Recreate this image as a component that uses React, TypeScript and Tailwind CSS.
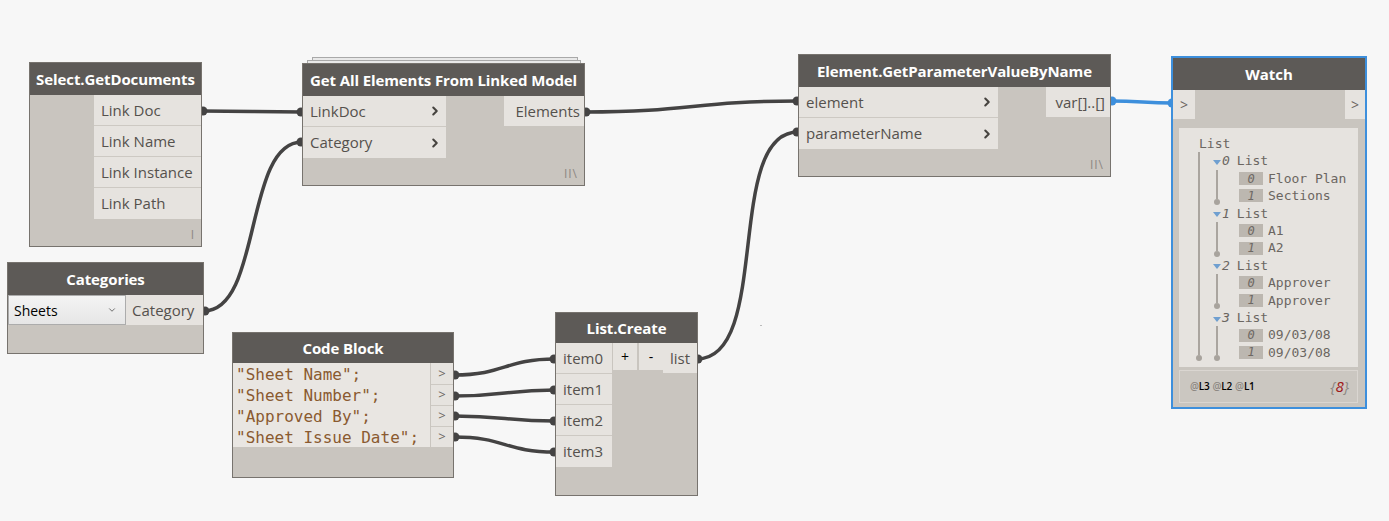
import React from 'react'
import clsx from 'clsx'
import { ChevronRight, ChevronDown } from 'lucide-react'

type NodeProps = {
	title: string
	className: string
	headerClass?: string
	children?: React.ReactNode
}

// generic dynamo node: dark title bar + warm grey body
const Node = ({ title, className, headerClass = 'h-[32px]', children }: NodeProps) => {
	return (
		<div className={clsx('absolute flex flex-col border border-[#77736e] bg-[#c9c5bf]', className)}>
			<div
				className={clsx(
					'shrink-0 bg-[#5d5a57] flex items-center justify-center text-white font-bold text-[15px] tracking-[-0.1px]',
					headerClass
				)}
			>
				{title}
			</div>
			{children}
		</div>
	)
}

const Lacing = ({ mark }: { mark: string }) => (
	<div className="flex-1 flex items-end justify-end pr-[6px] pb-[5px] text-[12px] leading-none text-[#8d8883] tracking-[1px]">
		{mark}
	</div>
)

const InPort = ({ label, chevron = true, last = false, w }: { label: string; chevron?: boolean; last?: boolean; w: string }) => (
	<div
		className={clsx(
			'h-[31px] flex items-center justify-between pl-[7px] pr-[4px] bg-[#e6e3df] text-[15px] text-[#55514d]',
			!last && 'border-b border-[#cdc9c3]',
			w
		)}
	>
		<span>{label}</span>
		{chevron && <ChevronRight size={14} strokeWidth={3.5} className="text-[#46433f]" />}
	</div>
)

const watchData = [
	['Floor Plan', 'Sections'],
	['A1', 'A2'],
	['Approver', 'Approver'],
	['09/03/08', '09/03/08'],
]

const TreeLine = ({ className }: { className?: string }) => (
	<div className={clsx('w-[6px] flex flex-col items-center shrink-0', className)}>
		<div className="w-[2px] flex-1 bg-[#aaa59f]" />
		<div className="w-[6px] h-[6px] rounded-full bg-[#a8a39d]" />
	</div>
)

const WatchTree = () => (
	<div className="mx-[6px] mr-[7px] mt-[9px] h-[239px] bg-[#e6e3df] pl-[17px] pt-[7px] font-['DejaVu_Sans_Mono',monospace] text-[13px] leading-[17.4px] text-[#6b6661]">
		<div className="pl-[3px]">List</div>
		<div className="flex">
			<TreeLine />
			<div className="ml-[11px] flex flex-col">
				{watchData.map((items, gi) => (
					<div key={gi}>
						<div className="flex items-center">
							<div className="w-0 h-0 border-l-[4px] border-r-[4px] border-t-[5px] border-l-transparent border-r-transparent border-t-[#6f9fd0] mt-[3px]" />
							<span className="ml-[1px] italic">{gi}</span>
							<span className="ml-[7px]">List</span>
						</div>
						<div className="flex">
							<TreeLine className="ml-[1px]" />
							<div className="ml-[19px] flex flex-col">
								{items.map((v, i) => (
									<div key={i} className="flex items-center h-[17.4px]">
										<div className="w-[24px] h-[13px] bg-[#bcb7b0] flex items-center justify-center italic text-[12px] leading-none text-[#6d6863]">
											{i}
										</div>
										<span className="ml-[5px]">{v}</span>
									</div>
								))}
							</div>
						</div>
					</div>
				))}
			</div>
		</div>
	</div>
)

const codeLines = ['"Sheet Name";', '"Sheet Number";', '"Approved By";', '"Sheet Issue Date";']

const Wires = () => (
	<svg className="absolute inset-0" width={1389} height={521}>
		<g fill="none" stroke="#444343" strokeWidth={3.5} strokeLinecap="round">
			<path d="M202,111 C250,111 255,112 302,112" />
			<path d="M204,311 C262,311 244,142 302,142" />
			<path d="M585,112 C690,112 695,101 798,101" />
			<path d="M697,359 C772,359 724,132 798,132" />
			<path d="M454,375 C505,375 505,359 555,359" />
			<path d="M454,396 C505,396 505,390 555,390" />
			<path d="M454,416 C505,416 505,421 555,421" />
			<path d="M454,437 C505,437 505,452 555,452" />
		</g>
		<g fill="#444343">
			<circle cx={203} cy={111} r={4.5} />
			<circle cx={301} cy={112} r={4.5} />
			<circle cx={205} cy={311} r={4.5} />
			<circle cx={301} cy={142} r={4.5} />
			<circle cx={586} cy={112} r={4.5} />
			<circle cx={797} cy={101} r={4.5} />
			<circle cx={698} cy={359} r={4.5} />
			<circle cx={797} cy={132} r={4.5} />
			<circle cx={455} cy={375} r={4.5} />
			<circle cx={455} cy={396} r={4.5} />
			<circle cx={455} cy={416} r={4.5} />
			<circle cx={455} cy={437} r={4.5} />
			<circle cx={554} cy={359} r={4.5} />
			<circle cx={554} cy={390} r={4.5} />
			<circle cx={554} cy={421} r={4.5} />
			<circle cx={554} cy={452} r={4.5} />
		</g>
		<path d="M1111,101 C1140,101 1145,103 1172,103" fill="none" stroke="#3d8fdc" strokeWidth={3.5} />
		<circle cx={1112} cy={101} r={4.5} fill="#3d8fdc" />
		<circle cx={1172} cy={103} r={4.5} fill="#3d8fdc" />
		<rect x={760} y={325} width={2} height={1} fill="#bbbbbb" />
	</svg>
)

export default function App() {
	return (
		<div className="relative w-[1389px] h-[521px] overflow-hidden bg-[#f7f7f7] font-['Open_Sans',sans-serif]">
			<Wires />

			{/* Select.GetDocuments */}
			<Node title="Select.GetDocuments" className="left-[29px] top-[62px] w-[173px] h-[185px]">
				<div className="flex justify-end">
					<div className="w-[107px] flex flex-col">
						<InPort label="Link Doc" chevron={false} w="w-full" />
						<InPort label="Link Name" chevron={false} w="w-full" />
						<InPort label="Link Instance" chevron={false} w="w-full" />
						<InPort label="Link Path" chevron={false} last w="w-full" />
					</div>
				</div>
				<Lacing mark="I" />
			</Node>

			{/* Categories */}
			<Node title="Categories" className="left-[7px] top-[262px] w-[197px] h-[92px]">
				<div className="h-[30px] flex">
					<div className="w-[118px] flex items-center justify-between pl-[5px] pr-[8px] border border-[#acacac] bg-gradient-to-b from-[#f4f4f4] to-[#e6e6e6] text-[14px] text-black">
						<span>Sheets</span>
						<ChevronDown size={10} strokeWidth={2} className="text-[#555]" />
					</div>
					<div className="flex-1 flex items-center pl-[6px] bg-[#e6e3df] text-[15px] text-[#55514d]">Category</div>
				</div>
			</Node>

			{/* stacked shadow behind the custom node */}
			<div className="absolute left-[312px] top-[57px] w-[266px] h-[20px] border border-[#a9a9a9] bg-[#e9e9e9]" />
			<div className="absolute left-[307px] top-[60px] w-[274px] h-[20px] border border-[#a9a9a9] bg-[#e9e9e9]" />

			{/* Get All Elements From Linked Model */}
			<Node title="Get All Elements From Linked Model" className="left-[302px] top-[63px] w-[283px] h-[123px]">
				<div className="flex justify-between">
					<div className="flex flex-col">
						<InPort label="LinkDoc" w="w-[143px]" />
						<InPort label="Category" last w="w-[143px]" />
					</div>
					<div className="w-[80px] h-[30px] flex items-center justify-end pr-[4px] bg-[#e6e3df] text-[15px] text-[#55514d]">
						Elements
					</div>
				</div>
				<Lacing mark="II\" />
			</Node>

			{/* Element.GetParameterValueByName */}
			<Node title="Element.GetParameterValueByName" className="left-[798px] top-[54px] w-[313px] h-[123px]">
				<div className="flex justify-between">
					<div className="flex flex-col">
						<InPort label="element" w="w-[199px]" />
						<InPort label="parameterName" last w="w-[199px]" />
					</div>
					<div className="w-[64px] h-[30px] flex items-center justify-end pr-[5px] bg-[#e6e3df] text-[15px] text-[#55514d]">
						var[]..[]
					</div>
				</div>
				<Lacing mark="II\" />
			</Node>

			{/* Watch */}
			<div className="absolute left-[1171px] top-[56px] w-[196px] h-[353px] border-2 border-[#3d8fdc] bg-[#c9c5bf] flex flex-col">
				<div className="h-[32px] shrink-0 bg-[#5d5a57] flex items-center justify-center text-white font-bold text-[15px]">
					Watch
				</div>
				<div className="h-[29px] flex justify-between">
					<div className="w-[22px] bg-[#e6e3df] flex items-center justify-center text-[14px] text-[#6b6661]">&gt;</div>
					<div className="w-[20px] bg-[#e6e3df] flex items-center justify-center text-[14px] text-[#6b6661]">&gt;</div>
				</div>
				<WatchTree />
				<div className="mx-[6px] mr-[7px] mt-[3px] h-[33px] border border-[#dad6d1] bg-[#cbc7c1] flex items-center justify-between pl-[10px] pr-[8px]">
					<div className="text-[10px] font-semibold tracking-[-0.2px] flex gap-[3px]">
						<span><span className="text-[#8d8883]">@</span><span className="text-black">L3</span></span>
						<span><span className="text-[#8d8883]">@</span><span className="text-black">L2</span></span>
						<span><span className="text-[#8d8883]">@</span><span className="text-black">L1</span></span>
					</div>
					<div className="italic text-[15px]">
						<span className="text-[#8d8883]">{'{'}</span>
						<span className="text-[#a01818]">8</span>
						<span className="text-[#8d8883]">{'}'}</span>
					</div>
				</div>
			</div>

			{/* Code Block */}
			<Node title="Code Block" className="left-[232px] top-[332px] w-[222px] h-[146px]" headerClass="h-[30px]">
				<div className="flex">
					<div className="flex-1 bg-[#e9e6e2] pl-[3px] font-['DejaVu_Sans_Mono',monospace] text-[16px] leading-[21px] text-[#8a5a30]">
						{codeLines.map((l) => (
							<div key={l} className="h-[21px] pt-[1px] whitespace-pre">
								{l}
							</div>
						))}
					</div>
					<div className="w-[23px] flex flex-col border-l border-[#c9c5bf]">
						{codeLines.map((l, i) => (
							<div
								key={l}
								className={clsx(
									'h-[21px] bg-[#e6e3df] flex items-center justify-center text-[13px] text-[#6b6661]',
									i > 0 && 'border-t border-[#cdc9c3]'
								)}
							>
								&gt;
							</div>
						))}
					</div>
				</div>
			</Node>

			{/* List.Create */}
			<Node title="List.Create" className="left-[555px] top-[312px] w-[143px] h-[184px]" headerClass="h-[30px]">
				<div className="flex">
					<div className="flex flex-col">
						<InPort label="item0" chevron={false} w="w-[56px]" />
						<InPort label="item1" chevron={false} w="w-[56px]" />
						<InPort label="item2" chevron={false} w="w-[56px]" />
						<InPort label="item3" chevron={false} last w="w-[56px]" />
					</div>
					<div className="ml-[1px] flex gap-[2px] items-start">
						<div className="w-[24px] h-[27px] bg-[#e6e3df] flex items-center justify-center text-[14px] text-black">+</div>
						<div className="w-[24px] h-[27px] bg-[#e6e3df] flex items-center justify-center text-[14px] text-black">-</div>
					</div>
					<div className="ml-auto w-[34px] h-[30px] bg-[#e6e3df] flex items-center justify-center text-[15px] text-[#55514d]">
						list
					</div>
				</div>
			</Node>
		</div>
	)
}
